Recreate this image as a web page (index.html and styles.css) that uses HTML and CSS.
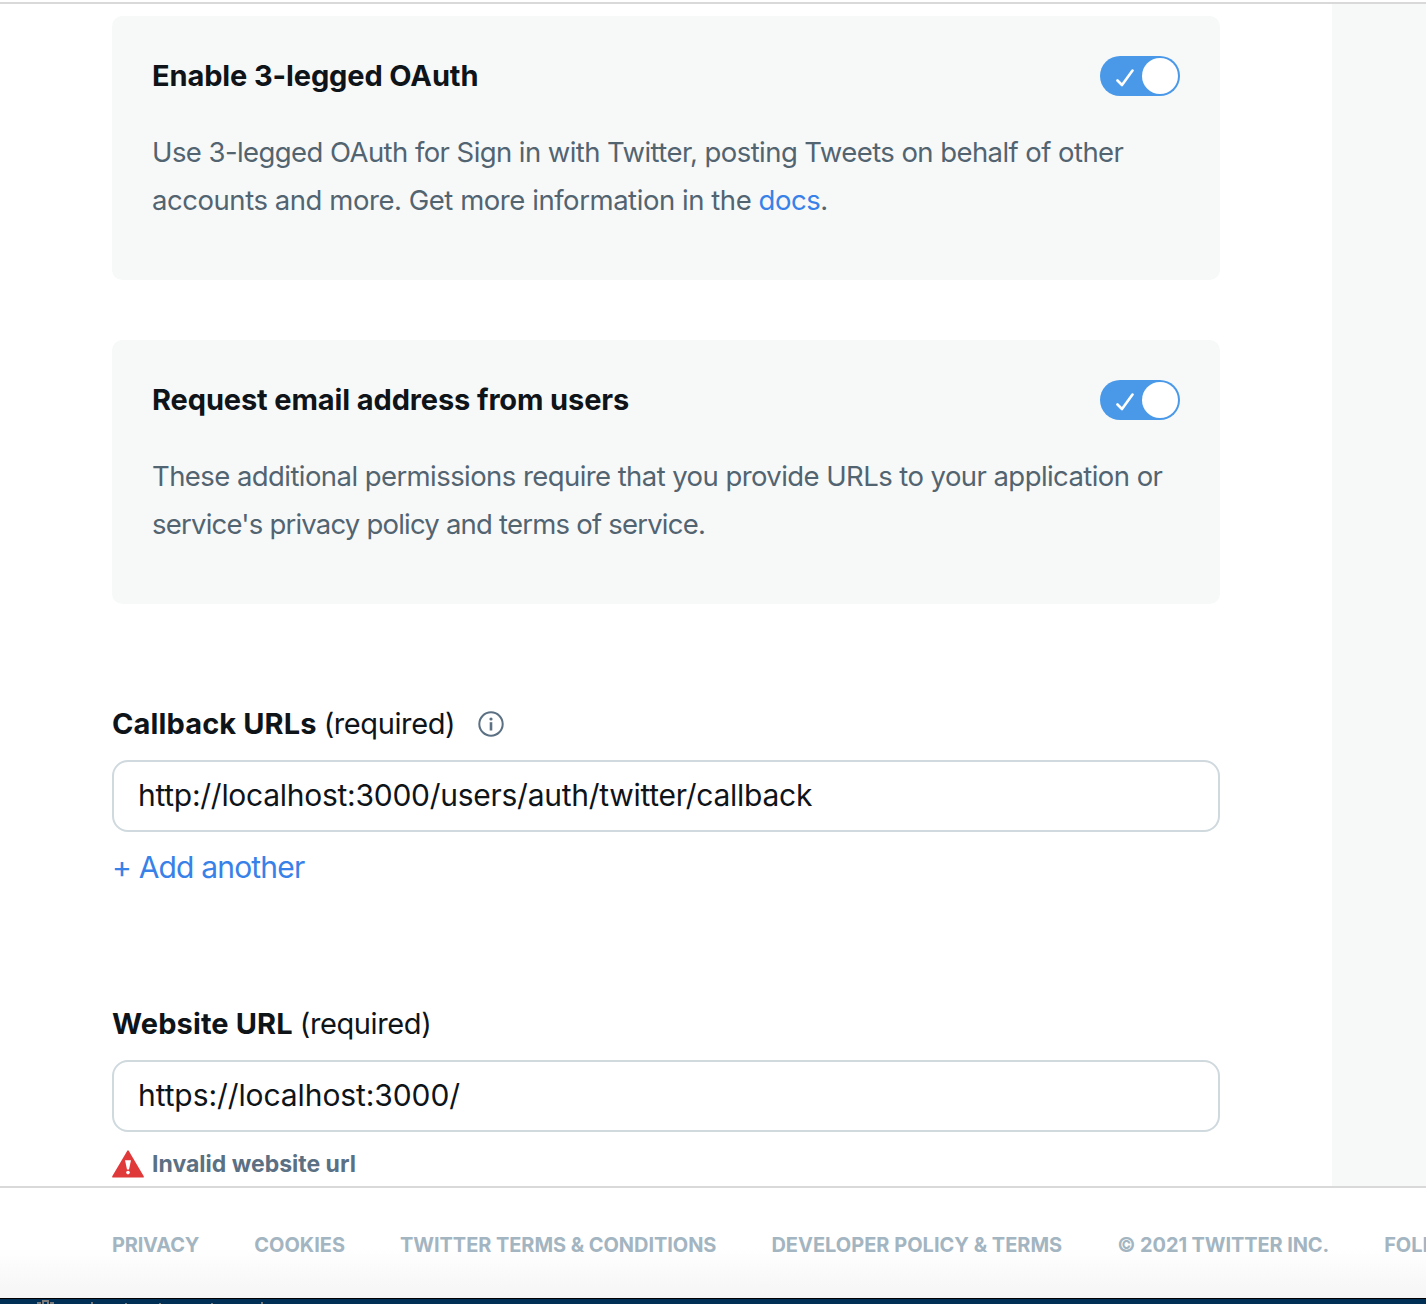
FILE: index.html
```html
<!DOCTYPE html>
<html lang="en">
<head>
    <meta charset="utf-8">
    <title>Authentication settings</title>
    <link rel="stylesheet" href="styles.css">
</head>
<body>
    <main class="page">
        <div class="settings">
            <section class="card">
                <div class="card-header">
                    <h2>Enable 3-legged OAuth</h2>
                    <button type="button" class="toggle" role="switch" aria-checked="true" aria-label="Enable 3-legged OAuth">
                        <svg width="18" height="18" viewBox="0 0 18 18"><path d="M1.5 11.5 6 16 16.5 1.5"/></svg>
                        <span class="knob"></span>
                    </button>
                </div>
                <p>Use 3-legged OAuth for Sign in with Twitter, posting Tweets on behalf of other<br><span class="t-accounts">accounts and more. Get more information in the <a href="#">docs</a>.</span></p>
            </section>

            <section class="card">
                <div class="card-header">
                    <h2>Request email address from users</h2>
                    <button type="button" class="toggle" role="switch" aria-checked="true" aria-label="Request email address from users">
                        <svg width="18" height="18" viewBox="0 0 18 18"><path d="M1.5 11.5 6 16 16.5 1.5"/></svg>
                        <span class="knob"></span>
                    </button>
                </div>
                <p>These additional permissions require that you provide URLs to your application or<br><span class="t-service">service's privacy policy and terms of service.</span></p>
            </section>

            <div class="field callback">
                <label for="callback"><b>Callback URLs</b> <span>(required)</span>
                    <svg class="info" width="26" height="26" viewBox="0 0 26 26">
                        <circle cx="13" cy="13" r="11.7" fill="none" stroke="#5b7083" stroke-width="2"/>
                        <circle cx="13" cy="8" r="1.6"/>
                        <path d="M11.7 11.2h2.6V19.500h-2.600z"/>
                    </svg>
                </label>
                <input type="text" id="callback" value="http://localhost:3000/users/auth/twitter/callback">
                <a href="#" class="add">+ Add another</a>
            </div>

            <div class="field website">
                <label for="website"><b>Website URL</b> <span>(required)</span></label>
                <input type="text" id="website" value="https://localhost:3000/">
                <div class="error">
                    <svg width="32" height="28" viewBox="0 0 32 28">
                        <path d="M15 1.2q1-1.8 2 0L31.6 26q.8 1.6-.8 1.6H1.2q-1.6 0-.8-1.6z" fill="#e0393a"/>
                        <path d="M13 10.2h6L17 19.5h-2z" fill="#fff"/>
                        <circle cx="16" cy="22.6" r="1.8" fill="#fff"/>
                    </svg>
                    <span>Invalid website url</span>
                </div>
            </div>
        </div>
    </main>

    <footer>
        <a href="#" class="f-privacy">PRIVACY</a>
        <a href="#">COOKIES</a>
        <a href="#" class="f-terms">TWITTER TERMS &amp; CONDITIONS</a>
        <a href="#">DEVELOPER POLICY &amp; TERMS</a>
        <span class="f-copy">© 2021 TWITTER INC.</span>
        <a href="#">FOLLOW</a>
    </footer>
    <div class="terminal">
        <svg width="280" height="5" viewBox="0 0 280 5">
            <path d="M37 4h4M43 5V2h5v3M50 4h4M92 5V3M126 5V4M160 5V4M212 5V4M262 5V3"/>
        </svg>
    </div>
</body>
</html>
```

FILE: styles.css
```css
* {
    box-sizing: border-box;
}

body {
    margin: 0;
    padding-top: 2px;
    height: 1304px;
    display: flex;
    flex-direction: column;
    overflow: hidden;
    font-family: Inter, "Liberation Sans", sans-serif;
    color: #0f1419;
    background: #fff;
}

a {
    color: #3881e8;
    text-decoration: none;
}

.page {
    height: 1186px;
    flex: none;
    border-top: 2px solid #d9d9d9;
    border-bottom: 2px solid #d9d9d9;
    background: #f7f9f9;
}

.settings {
    width: 1332px;
    height: 100%;
    padding: 12px 112px 0;
    background: #fff;
}

.card {
    height: 264px;
    margin-bottom: 60px;
    padding: 40px;
    border-radius: 10px;
    background: #f7f9f9;
}

.card-header {
    display: flex;
    justify-content: space-between;
    align-items: center;
    height: 40px;
}

h2 {
    margin: 0;
    font-size: 29px;
    font-weight: 700;
    line-height: 40px;
    letter-spacing: -0.12px;
}

.card p {
    margin: 32px 0 0;
    color: #536471;
    font-size: 27.5px;
    line-height: 48px;
    letter-spacing: -0.57px;
    white-space: nowrap;
}

.card .t-accounts {
    letter-spacing: -0.45px;
}

.card .t-service {
    letter-spacing: -0.79px;
}

.toggle {
    width: 80px;
    height: 40px;
    display: flex;
    align-items: center;
    justify-content: space-between;
    padding: 0 2px 0 16px;
    border: none;
    border-radius: 20px;
    background: #4a99e9;
}

.toggle svg {
    margin-top: 3px;
    fill: none;
    stroke: #fff;
    stroke-width: 2.6;
    stroke-linecap: round;
    stroke-linejoin: round;
}

.knob {
    width: 36px;
    height: 36px;
    border-radius: 50%;
    background: #fff;
}

.callback {
    margin-top: 100px;
    margin-bottom: 116px;
}

.field label {
    display: flex;
    align-items: center;
    gap: 7px;
    height: 38px;
    margin-bottom: 18px;
    font-size: 29px;
    white-space: nowrap;
}

.field b {
    letter-spacing: 0.12px;
}

.field label span {
    letter-spacing: -0.4px;
}

.info {
    margin: 2px 0 0 16px;
    fill: #5b7083;
}

.field input {
    display: block;
    width: 100%;
    height: 72px;
    padding: 0 24px 2px;
    border: 2px solid #cfd9de;
    border-radius: 16px;
    font-family: inherit;
    font-size: 30px;
    letter-spacing: -0.27px;
    color: #0f1419;
    background: #fff;
}

.website input {
    letter-spacing: -0.09px;
}

.add {
    display: block;
    margin: 15px 0 117px;
    font-size: 30px;
    line-height: 40px;
    letter-spacing: -0.82px;
}

.error {
    display: flex;
    align-items: center;
    gap: 8px;
    height: 32px;
    margin-top: 16px;
    color: #5b7083;
    font-size: 23px;
    font-weight: 700;
}

footer {
    flex: none;
    height: 110px;
    display: flex;
    gap: 55px;
    padding-left: 112px;
    background: linear-gradient(#fff 55%, #f5f5f5);
    color: #a3b5c1;
    font-size: 20px;
    font-weight: 700;
    line-height: 114px;
    white-space: nowrap;
}

footer a {
    color: inherit;
}

.f-privacy {
    letter-spacing: -0.2px;
}

.f-terms {
    letter-spacing: -0.06px;
}

.f-copy {
    letter-spacing: -0.1px;
}

.terminal {
    height: 6px;
    border-top: 1px solid #000;
    background: #002f56;
}

.terminal svg {
    display: block;
    fill: none;
    stroke: #7c7c7c;
    stroke-width: 2;
}
```
